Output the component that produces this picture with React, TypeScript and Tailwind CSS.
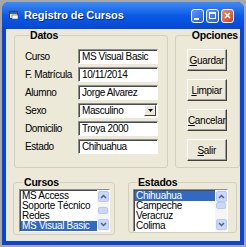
import React from 'react';

const font = { fontFamily: '"Liberation Sans", Arial, sans-serif' };

const ScrollArrow = ({ down }: { down?: boolean }) => (
  <div className="w-[11px] h-[11px] rounded-[2px] border border-[#b7c9f3] bg-[#c9d8fb] flex items-center justify-center">
    <svg width="7" height="5" viewBox="0 0 7 5">
      <path d={down ? 'M1 1 L3.5 3.5 L6 1' : 'M1 4 L3.5 1.5 L6 4'} stroke="#4d6185" strokeWidth="1.5" fill="none" />
    </svg>
  </div>
);

const ListBox = ({ items, selected, thumbTop }: { items: string[]; selected: number; thumbTop: string }) => (
  <div className="h-[43px] flex border-t border-l border-[#8d8d8d] border-b border-r border-b-white border-r-white shadow-[inset_1px_1px_0_#4a4a4a] bg-white pl-[1px] overflow-hidden">
    <div className="flex-1 flex flex-col pt-[1px]">
      {items.map((it, i) => (
        <div
          key={it}
          className={`h-[10px] leading-[10px] text-[10px] pl-[1px] tracking-[-0.3px] ${i === selected ? 'bg-[#316ac5] text-white' : 'text-black'}`}
        >
          {it}
        </div>
      ))}
    </div>
    <div className="w-[12px] bg-[#f5f5f1] flex flex-col justify-between items-center py-[1px] relative">
      <ScrollArrow />
      <div className={`absolute left-[1px] w-[10px] h-[7px] rounded-[2px] border border-[#b7c9f3] bg-[#c9d8fb] ${thumbTop}`} />
      <ScrollArrow down />
    </div>
  </div>
);

const Field = ({ label, value, combo }: { label: string; value: string; combo?: boolean }) => (
  <div className="flex items-center h-[15px]">
    <div className="w-[53px] text-[10px] tracking-[-0.4px] text-black">{label}</div>
    <div className="w-[80px] h-[15px] border-t border-l border-[#8d8d8d] border-b border-r border-b-white border-r-white bg-white shadow-[inset_1px_1px_0_#4a4a4a] flex items-center">
      <span className="flex-1 text-[10px] tracking-[-0.4px] pl-[3px] text-black leading-none">{value}</span>
      {combo && (
        <div className="w-[12px] h-[11px] mr-[1px] bg-[#ece9d8] border-t border-l border-white border-b border-r border-b-[#404040] border-r-[#404040] flex items-center justify-center">
          <svg width="5" height="3" viewBox="0 0 5 3">
            <path d="M0 0 H5 L2.5 3 Z" fill="#000" />
          </svg>
        </div>
      )}
    </div>
  </div>
);

const Btn = ({ u, rest }: { u: string; rest: string }) => (
  <button className="w-[40px] h-[22px] bg-[#ece9d8] border-t border-l border-white border-b border-r border-b-[#404040] border-r-[#404040] shadow-[inset_-1px_-1px_0_#a0a0a0] text-[10px] tracking-[-0.3px] text-black">
    <span className="underline">{u}</span>
    {rest}
  </button>
);

const Legend = ({ children }: { children: React.ReactNode }) => (
  <legend className="ml-[4px] px-[1px] text-[10.5px] leading-[13px] font-bold text-black tracking-[-0.2px]">{children}</legend>
);

export default function App() {
  return (
    <div className="w-[246px] h-[247px] bg-[#a8a8a8] pt-[2px] pl-[2px]" style={font}>
      <div className="w-[242px] h-[243px] flex flex-col rounded-t-[7px] bg-[#0b44d8]">
        {/* title bar */}
        <div className="h-[27px] flex items-center rounded-t-[7px] bg-gradient-to-b from-[#3f8cf3] via-[#0a5ae8] to-[#0547d4] pl-[7px] pr-[10px]">
          <svg width="10" height="9" viewBox="0 0 10 9" className="mr-[5px]">
            <rect x="0.5" y="0.5" width="8" height="7" fill="#e8e8e8" stroke="#404040" />
            <rect x="1" y="1" width="7" height="2" fill="#3a5fb5" />
            <rect x="3" y="4" width="6" height="4" fill="#fff" stroke="#555" strokeWidth="0.6" />
          </svg>
          <span className="flex-1 text-white font-bold text-[11px] tracking-[-0.1px] [text-shadow:1px_1px_0_#0a2a8a]">Registro de Cursos</span>
          <div className="flex gap-[2px]">
            <div className="w-[13px] h-[14px] rounded-[3px] border border-white bg-gradient-to-br from-[#5f9bfa] to-[#1f5be0] flex items-end justify-start pl-[2px] pb-[2px]">
              <div className="w-[5px] h-[2px] bg-white" />
            </div>
            <div className="w-[13px] h-[14px] rounded-[3px] border border-white bg-gradient-to-br from-[#5f9bfa] to-[#1f5be0] flex items-center justify-center">
              <div className="w-[7px] h-[7px] border border-white border-t-2" />
            </div>
            <div className="w-[13px] h-[14px] rounded-[3px] border border-white bg-gradient-to-br from-[#f08a63] to-[#d2401c] flex items-center justify-center">
              <svg width="7" height="7" viewBox="0 0 7 7">
                <path d="M1 1 L6 6 M6 1 L1 6" stroke="#fff" strokeWidth="1.5" />
              </svg>
            </div>
          </div>
        </div>

        {/* body */}
        <div className="mx-[4px] mb-[4px] flex-1 bg-[#ece9d8] flex flex-col gap-[8px]">
          <div className="flex pl-[8px] gap-[7px]">
            <fieldset className="w-[156px] h-[139px] border border-[#d0d0bf] rounded-[3px] pt-[7px] pl-[10px]">
              <Legend>Datos</Legend>
              <div className="flex flex-col gap-[3px]">
                <Field label="Curso" value="MS Visual Basic" />
                <Field label="F. Matrícula" value="10/11/2014" />
                <Field label="Alumno" value="Jorge Alvarez" />
                <Field label="Sexo" value="Masculino" combo />
                <Field label="Domicilio" value="Troya 2000" />
                <Field label="Estado" value="Chihuahua" />
              </div>
            </fieldset>
            <fieldset className="w-[60px] h-[139px] border border-[#d0d0bf] rounded-[3px] pt-[7px] pl-[11px]">
              <Legend>Opciones</Legend>
              <div className="flex flex-col gap-[8px]">
                <Btn u="G" rest="uardar" />
                <Btn u="L" rest="impiar" />
                <Btn u="C" rest="ancelar" />
                <Btn u="S" rest="alir" />
              </div>
            </fieldset>
          </div>
          <div className="flex pl-[7px] gap-[13px]">
            <fieldset className="w-[102px] h-[59px] border border-[#d0d0bf] rounded-[3px] pl-[5px]">
              <Legend>Cursos</Legend>
              <div className="w-[91px]">
                <ListBox items={['MS Access', 'Soporte Técnico', 'Redes', 'MS Visual Basic']} selected={3} thumbTop="top-[17px]" />
              </div>
            </fieldset>
            <fieldset className="w-[109px] h-[57px] border border-[#d0d0bf] rounded-[3px] pl-[4px]">
              <Legend>Estados</Legend>
              <div className="w-[95px]">
                <ListBox items={['Chihuahua', 'Campeche', 'Veracruz', 'Colima']} selected={0} thumbTop="top-[12px]" />
              </div>
            </fieldset>
          </div>
        </div>
      </div>
    </div>
  );
}
